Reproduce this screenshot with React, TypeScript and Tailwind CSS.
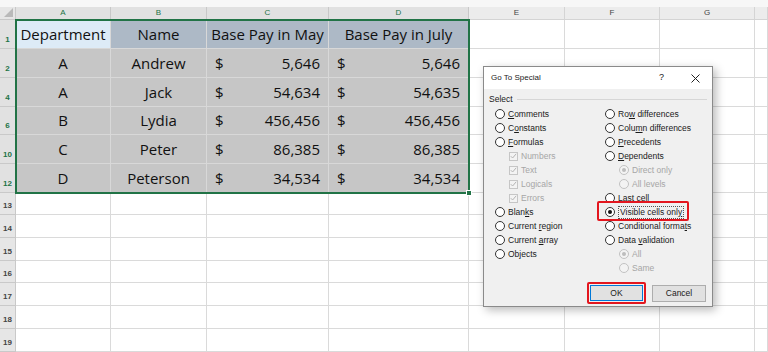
import React from 'react';

type Opt = {
  pre: string;
  key?: string;
  post?: string;
  kind: 'radio' | 'check' | 'sub';
  checked?: boolean;
  disabled?: boolean;
  focus?: boolean;
};

const leftOpts: Opt[] = [
  { pre: '', key: 'C', post: 'omments', kind: 'radio' },
  { pre: 'C', key: 'o', post: 'nstants', kind: 'radio' },
  { pre: '', key: 'F', post: 'ormulas', kind: 'radio' },
  { pre: 'Numbers', kind: 'check', checked: true, disabled: true },
  { pre: 'Text', kind: 'check', checked: true, disabled: true },
  { pre: 'Logicals', kind: 'check', checked: true, disabled: true },
  { pre: 'Errors', kind: 'check', checked: true, disabled: true },
  { pre: 'Blan', key: 'k', post: 's', kind: 'radio' },
  { pre: 'Current ', key: 'r', post: 'egion', kind: 'radio' },
  { pre: 'Current ', key: 'a', post: 'rray', kind: 'radio' },
  { pre: 'Ob', key: 'j', post: 'ects', kind: 'radio' },
];

const rightOpts: Opt[] = [
  { pre: 'Ro', key: 'w', post: ' differences', kind: 'radio' },
  { pre: 'Colu', key: 'm', post: 'n differences', kind: 'radio' },
  { pre: '', key: 'P', post: 'recedents', kind: 'radio' },
  { pre: '', key: 'D', post: 'ependents', kind: 'radio' },
  { pre: 'Direct only', kind: 'sub', checked: true, disabled: true },
  { pre: 'All levels', kind: 'sub', disabled: true },
  { pre: 'La', key: 's', post: 't cell', kind: 'radio' },
  { pre: 'Visible cells onl', key: 'y', post: '', kind: 'radio', checked: true, focus: true },
  { pre: 'Conditional forma', key: 't', post: 's', kind: 'radio' },
  { pre: 'Data ', key: 'v', post: 'alidation', kind: 'radio' },
  { pre: 'All', kind: 'sub', checked: true, disabled: true },
  { pre: 'Same', kind: 'sub', disabled: true },
];

const colLetters = ['A', 'B', 'C', 'D', 'E', 'F', 'G', ''];

const rows = [
  { n: '1', cells: ['Department', 'Name', 'Base Pay in May', 'Base Pay in July'] },
  { n: '2', cells: ['A', 'Andrew', '5,646', '5,646'] },
  { n: '4', cells: ['A', 'Jack', '54,634', '54,635'] },
  { n: '6', cells: ['B', 'Lydia', '456,456', '456,456'] },
  { n: '10', cells: ['C', 'Peter', '86,385', '86,385'] },
  { n: '12', cells: ['D', 'Peterson', '34,534', '34,534'] },
];

const emptyRows = ['13', '14', '15', '16', '17', '18', '19'];

const Radio: React.FC<{ checked?: boolean; disabled?: boolean }> = ({ checked, disabled }) => (
  <span
    className={`flex h-[10px] w-[10px] shrink-0 items-center justify-center rounded-full border ${
      disabled ? 'border-[#c2c2c2] bg-[#f3f3f3]' : 'border-[#333333] bg-white'
    }`}
  >
    {checked && (
      <span className={`h-[4px] w-[4px] rounded-full ${disabled ? 'bg-[#bdbdbd]' : 'bg-[#111111]'}`} />
    )}
  </span>
);

const Check: React.FC = () => (
  <span className="flex h-[9px] w-[9px] shrink-0 items-center justify-center border border-[#c6c6c6] bg-[#f3f3f3]">
    <svg width="7" height="6" viewBox="0 0 7 6">
      <path d="M0.8 3.2 L2.6 5 L6.2 0.8" fill="none" stroke="#b4b4b4" strokeWidth="1" />
    </svg>
  </span>
);

const Option: React.FC<{ o: Opt }> = ({ o }) => {
  const text = (
    <span className={o.disabled ? 'text-[#a6a6a6]' : 'text-[#1a1a1a]'}>
      {o.pre}
      {o.key && <span className="underline underline-offset-[1px]">{o.key}</span>}
      {o.post}
    </span>
  );
  return (
    <div className={`relative flex h-[14px] items-center gap-[3px] ${o.kind === 'radio' ? '' : 'pl-[14px]'}`}>
      {o.kind === 'check' ? <Check /> : <Radio checked={o.checked} disabled={o.disabled} />}
      {o.focus ? <span className="border border-dotted border-[#555] px-[1px] leading-[11px]">{text}</span> : text}
      {o.focus && (
        <span className="absolute left-[-8px] top-[-4px] h-[20px] w-[92px] rounded-[2px] border-2 border-[#e3161e]" />
      )}
    </div>
  );
};

const Dialog: React.FC = () => (
  <div className="absolute left-[483px] top-[66px] flex h-[241px] w-[230px] flex-col border border-[#8a8a8a] bg-[#f0f0f0] font-['Liberation_Sans',Arial,sans-serif] text-[8.5px] shadow-[3px_3px_9px_rgba(0,0,0,0.28)]">
    <div className="flex h-[22px] items-center bg-white pl-[7px] text-[8px] text-[#1a1a1a]">
      <span className="flex-1">Go To Special</span>
      <span className="mr-[27px] text-[9px]">?</span>
      <svg width="9" height="9" viewBox="0 0 9 9" className="mr-[12px]">
        <path d="M0.5 0.5 L8.5 8.5 M8.5 0.5 L0.5 8.5" stroke="#222" strokeWidth="1" />
      </svg>
    </div>
    <div className="mt-[4px] flex h-[12px] items-center gap-[4px] pl-[5px] pr-[5px] text-[#1a1a1a]">
      <span>Select</span>
      <span className="h-px flex-1 bg-[#d6d6d6]" />
    </div>
    <div className="mt-[2px] grid grid-cols-[110px_1fr] pl-[11px]">
      <div className="flex flex-col">
        {leftOpts.map((o) => (
          <Option key={o.pre + (o.post ?? '')} o={o} />
        ))}
      </div>
      <div className="flex flex-col">
        {rightOpts.map((o) => (
          <Option key={o.pre + (o.post ?? '')} o={o} />
        ))}
      </div>
    </div>
    <div className="mt-[7px] flex items-start justify-end gap-[6px] pr-[6px]">
      <div className="rounded-[2px] border-2 border-[#e3161e] p-px">
        <button className="flex h-[16px] w-[53px] items-center justify-center border border-[#0078d7] bg-[#e1e1e1] text-[#1a1a1a]">
          OK
        </button>
      </div>
      <button className="mt-[3px] flex h-[17px] w-[54px] items-center justify-center border border-[#adadad] bg-[#e1e1e1] text-[#1a1a1a]">
        Cancel
      </button>
    </div>
  </div>
);

export default function App() {
  return (
    <div className="relative h-[352px] w-[768px] overflow-hidden bg-white">
      <div className="grid h-full grid-cols-[16px_95px_96px_122px_140px_96px_95px_95px_1fr] grid-rows-[7px_13px_29px_29px_29px_28px_29px_29px_22px_23px_23px_22px_23px_23px_23px]">
        {/* top strip */}
        <div className="col-span-9 bg-[#f7f7f7]" />

        {/* column headers */}
        <div className="relative border-b border-r border-[#c8c8c8] bg-[#e6e6e6]">
          <svg width="9" height="9" viewBox="0 0 9 9" className="absolute bottom-[2px] right-[2px]">
            <path d="M9 0 L9 9 L0 9 Z" fill="#b9b9b9" />
          </svg>
        </div>
        {colLetters.map((c, i) => (
          <div
            key={'h' + i}
            className={`flex items-center justify-center border-b border-r font-['Liberation_Sans',Arial,sans-serif] text-[8px] ${
              i < 4 ? 'border-[#c8c8c8] bg-[#e1e1e1] text-[#217346]' : 'border-[#d4d4d4] bg-[#ececec] text-[#444444]'
            }`}
          >
            {c}
          </div>
        ))}

        {/* data rows */}
        {rows.map((r, ri) => (
          <React.Fragment key={r.n}>
            <div className="flex items-end justify-center border-b border-r border-[#c9c9c9] bg-[#e1e1e1] pb-[2px] font-['Liberation_Sans',Arial,sans-serif] text-[8px] font-bold text-[#217346]">
              {r.n}
            </div>
            {r.cells.map((v, ci) => {
              const bg =
                ri === 0 ? (ci === 0 ? 'bg-[#ddebf7]' : 'bg-[#adb9c6]') : 'bg-[#c6c6c6]';
              const money = ri > 0 && ci >= 2;
              return (
                <div
                  key={ci}
                  className={`flex items-center border-b border-r border-[#d8d8d8] font-['Open_Sans',Arial,sans-serif] text-[15px] text-[#111111] ${bg} ${
                    money ? 'justify-between pl-[8px] pr-[8px]' : 'justify-center'
                  }`}
                >
                  {money && <span>$</span>}
                  <span>{v}</span>
                </div>
              );
            })}
            {[0, 1, 2, 3].map((k) => (
              <div key={'e' + k} className="border-b border-r border-[#dadada]" />
            ))}
          </React.Fragment>
        ))}

        {/* empty rows */}
        {emptyRows.map((n) => (
          <React.Fragment key={n}>
            <div className="flex items-end justify-center border-b border-r border-[#c9c9c9] bg-[#e6e6e6] pb-[2px] font-['Liberation_Sans',Arial,sans-serif] text-[8px] font-bold text-[#444444]">
              {n}
            </div>
            {[0, 1, 2, 3, 4, 5, 6, 7].map((k) => (
              <div key={k} className="border-b border-r border-[#dadada]" />
            ))}
          </React.Fragment>
        ))}
      </div>

      {/* selection outline A1:D12 */}
      <div className="absolute left-[15px] top-[19px] h-[175px] w-[455px] border-2 border-[#217346]">
        <span className="absolute bottom-[-4px] right-[-4px] h-[6px] w-[6px] border border-white bg-[#217346]" />
      </div>

      <Dialog />
    </div>
  );
}
